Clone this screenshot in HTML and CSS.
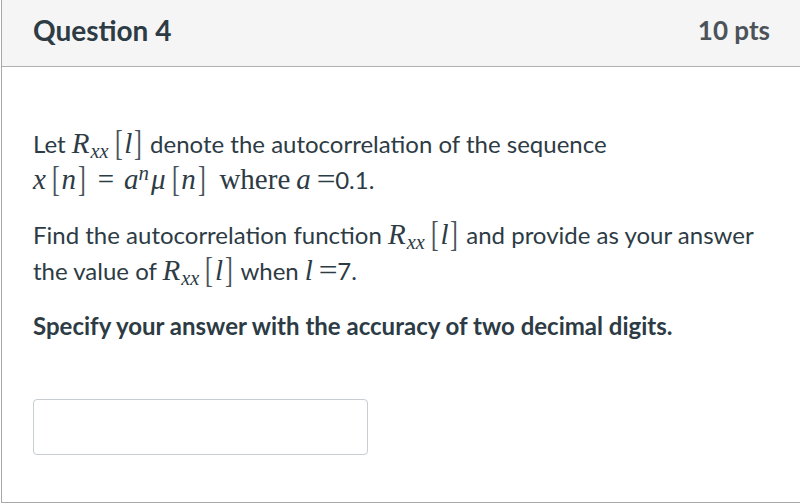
FILE: index.html
```html
<!DOCTYPE html>
<html>
<head>
<meta charset="utf-8">
<link rel="stylesheet" href="styles.css">
</head>
<body>
<div class="card">
  <div class="header">
    <h2 class="title">Question 4</h2>
    <span class="pts">10 pts</span>
  </div>
  <div class="content">
    <p>Let <span class="math"><i class="R">R</i><sub><i>xx</i></sub><span class="br bl">[</span><i>l</i><span class="br">]</span></span> denote the autocorrelation of the sequence <span class="math"><i>x</i><span class="br bl">[</span><i>n</i><span class="br">]</span><span class="rel">=</span><i>a</i><sup><i>n</i></sup><i>μ</i><span class="br bl">[</span><i>n</i><span class="br">]</span><span class="word">where</span><i>a</i><span class="rel rl">=</span></span>0.1.</p>
    <p>Find the autocorrelation function <span class="math"><i class="R">R</i><sub><i>xx</i></sub><span class="br bl">[</span><i>l</i><span class="br">]</span></span> and provide as your answer the value of <span class="math"><i class="R">R</i><sub><i>xx</i></sub><span class="br bl">[</span><i>l</i><span class="br">]</span></span> when <span class="math"><i>l</i><span class="rel rl">=</span></span>7.</p>
    <p class="strong">Specify your answer with the accuracy of two decimal digits.</p>
    <input class="answer" type="text">
  </div>
</div>
</body>
</html>
```

FILE: styles.css
```css
html, body {
  margin: 0;
  padding: 0;
  background: #fff;
}
body {
  font-family: Lato, "Liberation Sans", sans-serif;
  color: #2d3b45;
  overflow: hidden;
}
.card {
  margin-left: 1px;
  height: 503px;
  box-sizing: border-box;
  border-left: 1px solid #a8a8a8;
  border-bottom: 1px solid #a8a8a8;
}
.header {
  display: flex;
  align-items: center;
  justify-content: space-between;
  height: 67px;
  box-sizing: border-box;
  background: #f5f5f5;
  border-bottom: 1px solid #b0b0b0;
  padding: 0 30px 6px 31px;
}
.title {
  margin: 0;
  font-size: 28px;
  font-weight: 700;
  color: #2d3b45;
}
.pts {
  font-size: 26px;
  font-weight: 700;
  color: #4b5359;
}
.content {
  padding: 59px 30px 0 31px;
}
.content p {
  margin: 0 0 19px;
  font-size: 24px;
  line-height: 36px;
}
.content p.strong {
  font-weight: 700;
  margin-bottom: 55px;
}
.math {
  font-family: "Liberation Serif", "Times New Roman", serif;
  font-size: 29px;
  line-height: 1;
  white-space: nowrap;
  color: #2d3b45;
}
.math i {
  font-style: italic;
}
.math i.R {
  margin-right: 1px;
}
.math sub {
  font-size: 0.7em;
  vertical-align: -0.24em;
  line-height: 0;
}
.math sup {
  font-size: 0.72em;
  vertical-align: 0.45em;
  line-height: 0;
  margin-right: 2px;
}
.br {
  display: inline-block;
  font-style: normal;
  line-height: 0;
  transform: scale(0.8, 1.22);
  transform-origin: 50% 60%;
  margin: 0 1px;
  color: #4a545c;
}
.br.bl {
  margin-left: 5px;
}
.rel {
  margin: 0 10px;
}
.rel.rl {
  margin-right: 1px;
  margin-left: 7px;
  display: inline-block;
  transform: scaleX(1.15);
}
.word {
  margin: 0 6px 0 12px;
}
.answer {
  display: block;
  width: 335px;
  height: 56px;
  box-sizing: border-box;
  border: 1px solid #c7cdd1;
  border-radius: 4px;
  margin: 0;
  padding: 0 10px;
  background: #fff;
}
```
